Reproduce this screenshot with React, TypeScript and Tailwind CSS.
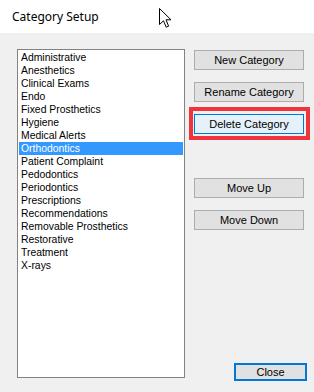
const categories = [
  "Administrative",
  "Anesthetics",
  "Clinical Exams",
  "Endo",
  "Fixed Prosthetics",
  "Hygiene",
  "Medical Alerts",
  "Orthodontics",
  "Patient Complaint",
  "Pedodontics",
  "Periodontics",
  "Prescriptions",
  "Recommendations",
  "Removable Prosthetics",
  "Restorative",
  "Treatment",
  "X-rays",
];

const selected = "Orthodontics";

function Cursor() {
  return (
    <svg
      className="absolute left-[159px] top-[8px]"
      width="13"
      height="20"
      viewBox="0 0 13 20"
    >
      <path
        d="M0.5 0.5 L0.5 16.5 L4.5 12.8 L7.2 19.2 L9.6 18.2 L7 11.8 L12 11.8 Z"
        fill="#fff"
        stroke="#000"
        strokeWidth="1"
        strokeLinejoin="round"
      />
    </svg>
  );
}

function WinButton({
  label,
  variant = "normal",
  className = "",
}: {
  label: string;
  variant?: "normal" | "hover" | "default";
  className?: string;
}) {
  const look =
    variant === "hover"
      ? "bg-[#e5f1fb] border border-[#0078d7]"
      : variant === "default"
        ? "bg-[#e1e1e1] border-2 border-[#0078d7]"
        : "bg-[#e1e1e1] border border-[#adadad]";
  return (
    <button
      className={`flex items-center justify-center text-[11px] text-black leading-none ${look} ${className}`}
    >
      {label}
    </button>
  );
}

export default function App() {
  return (
    <div
      className="relative w-[314px] h-[392px] bg-[#f0f0f0] overflow-hidden"
      style={{ fontFamily: '"Liberation Sans", Arial, sans-serif' }}
    >
      <div className="h-[33px] bg-white flex items-center pl-[12px]">
        <span
          className="text-[12px] text-black"
          style={{ fontFamily: '"Noto Sans", "Open Sans", sans-serif' }}
        >
          Category Setup
        </span>
      </div>
      <Cursor />

      <div className="flex pl-[17px] pt-[16px] gap-[9px]">
        <div className="w-[168px] h-[329px] bg-white border border-[#828282] p-[1px]">
          {categories.map((c) => (
            <div
              key={c}
              className={`h-[13px] leading-[13px] pl-[2px] text-[10.4px] ${
                c === selected ? "bg-[#3399ff] text-white" : "text-black"
              }`}
            >
              {c}
            </div>
          ))}
        </div>

        <div className="w-[113px] h-[332px] flex flex-col pt-[1px]">
          <WinButton label="New Category" className="w-[110px] h-[20px]" />
          <WinButton
            label="Rename Category"
            className="w-[110px] h-[20px] mt-[12px]"
          />
          <div className="relative w-[110px] h-[20px] mt-[12px]">
            <WinButton
              label="Delete Category"
              variant="hover"
              className="w-[110px] h-[20px]"
            />
            <div className="absolute -left-[5px] -top-[7px] -right-[6px] -bottom-[6px] border-[4px] border-[#f0343e] pointer-events-none" />
          </div>
          <WinButton
            label="Move Up"
            className="w-[110px] h-[20px] mt-[44px]"
          />
          <WinButton
            label="Move Down"
            className="w-[110px] h-[20px] mt-[12px]"
          />
          <WinButton
            label="Close"
            variant="default"
            className="w-[73px] h-[18px] mt-auto self-end"
          />
        </div>
      </div>
    </div>
  );
}
